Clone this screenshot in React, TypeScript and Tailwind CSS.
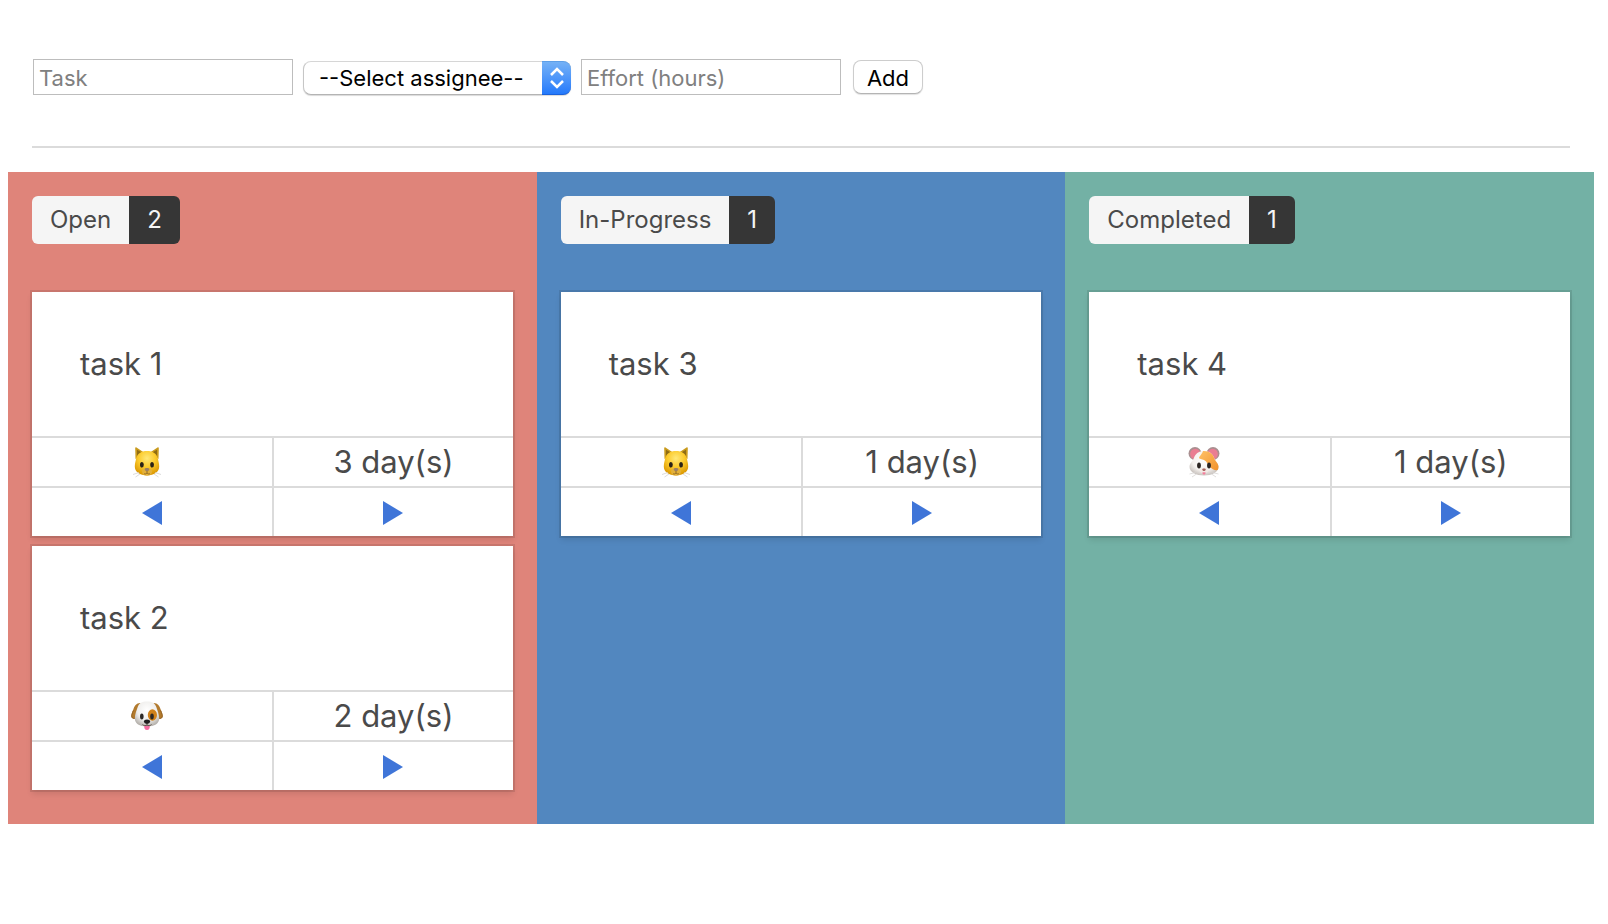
import { useState } from "react";
import type { FormEvent } from "react";

type Animal = "cat" | "dog" | "hamster";
type Task = { id: number; name: string; assignee: Animal; days: number; stage: number };

const stages = [
  { title: "Open", color: "bg-[#df847a]" },
  { title: "In-Progress", color: "bg-[#5287bf]" },
  { title: "Completed", color: "bg-[#73b1a5]" },
];

const initialTasks: Task[] = [
  { id: 1, name: "task 1", assignee: "cat", days: 3, stage: 0 },
  { id: 2, name: "task 2", assignee: "dog", days: 2, stage: 0 },
  { id: 3, name: "task 3", assignee: "cat", days: 1, stage: 1 },
  { id: 4, name: "task 4", assignee: "hamster", days: 1, stage: 2 },
];

function Cat() {
  return (
    <svg viewBox="0 0 32 32" className="size-8" role="img" aria-label="cat">
      <defs>
        <radialGradient id="cat-face" cx="50%" cy="30%" r="70%">
          <stop offset="0" stopColor="#ffe878" />
          <stop offset="0.5" stopColor="#fccb2c" />
          <stop offset="1" stopColor="#d99500" />
        </radialGradient>
      </defs>
      <path d="M4.500 13 4.200 2.200c0-.9.6-1.200 1.300-.7L13 6.500zM27.500 13l.3-10.800c0-.9-.6-1.200-1.300-.7L19 6.500z" fill="#c99a1c" />
      <path d="M6 10.500V3.700L11.500 7zM26 10.500V3.700L20.500 7z" fill="#8f6c14" />
      <path d="M16 5c5.500 0 10 2.500 11 8 .4 2.500 1.200 4.500 1.200 7.500 0 5.500-5.200 9-12.200 9S3.800 26 3.800 20.500c0-3 .8-5 1.200-7.500 1-5.500 5.500-8 11-8z" fill="url(#cat-face)" />
      <path d="M11 25.500c0-2.500 2.300-3.500 5-3.500s5 1 5 3.500-2 4-5 4-5-1.500-5-4z" fill="#e3b03a" />
      <ellipse cx="10.900" cy="18.800" rx="1.900" ry="2.800" fill="#2b2318" />
      <ellipse cx="21.100" cy="18.800" rx="1.900" ry="2.800" fill="#2b2318" />
      <path d="M13.700 23.300c0-1 1-1.300 2.300-1.300s2.300.3 2.300 1.300-1.300 2-2.300 2-2.300-1-2.300-2z" fill="#9b8065" />
      <path d="M16 25v2m0 0c-.8 1-2 1.200-3 .7m3-.7c.8 1 2 1.200 3 .7" stroke="#8a6420" strokeWidth=".9" fill="none" />
      <path d="m8 26.500-6 2M9 28l-4.500 3M24 26.500l6 2M23 28l4.500 3" stroke="#d2d2d2" strokeWidth=".8" />
    </svg>
  );
}

function Dog() {
  return (
    <svg viewBox="0 0 32 32" className="size-8" role="img" aria-label="dog">
      <defs>
        <radialGradient id="dog-face" cx="50%" cy="35%" r="65%">
          <stop offset="0" stopColor="#ffffff" />
          <stop offset="0.6" stopColor="#f0efed" />
          <stop offset="1" stopColor="#b5b1ac" />
        </radialGradient>
      </defs>
      <path d="M9.500 3C5 3 3.500 6 2.300 9.500 1.300 12.500-.2 15.500.8 17.500c1 1.800 4 1.500 5.700-.5C8 13 9 8 9.500 3zM22.500 3c4.500 0 6 3 7.200 6.500 1 3 2.500 6 1.500 8-1 1.800-4 1.500-5.700-.5C24 13 23 8 22.500 3z" fill="#b27a2d" />
      <path d="M2.300 10.500C1.300 13 0 15.500.9 17.300c.8 1.500 3 1.500 4.500.2M29.700 10.500c1 2.500 2.300 5 1.400 6.800-.8 1.500-3 1.500-4.500.2" stroke="#8c5a1c" strokeWidth=".9" fill="none" />
      <path d="M16 1.500c5 0 8 1.800 9.300 5.500 1.200 3.500 2.900 7.500 2.900 11.500 0 5-4.700 8-12.200 8s-12.200-3-12.200-8c0-4 1.700-8 2.900-11.500C8 3.300 11 1.500 16 1.500z" fill="url(#dog-face)" />
      <ellipse cx="21.400" cy="15" rx="4.600" ry="5.800" fill="#cf811b" />
      <ellipse cx="10.800" cy="16.500" rx="1.800" ry="2.900" fill="#2d2825" />
      <ellipse cx="21" cy="16.500" rx="1.800" ry="2.900" fill="#2d2825" />
      <path d="M12.900 21.500c0-1.300 1.200-2 3.100-2s3.100.7 3.100 2-2 2.600-3.100 2.600-3.100-1.300-3.100-2.600z" fill="#1f1d1d" />
      <path d="M13.300 25.500c1.700.7 3.700.7 5.400 0 .4 2.600-.5 4.500-2.700 4.500s-3.100-1.900-2.700-4.500z" fill="#f46ca0" />
      <path d="M16 23.500v1.800m-4.500-.8c1 1.300 3.500 1.400 4.500.6 1 .8 3.500.7 4.500-.6" stroke="#53463e" strokeWidth=".9" fill="none" />
    </svg>
  );
}

function Hamster() {
  return (
    <svg viewBox="0 0 32 32" className="size-8" role="img" aria-label="hamster">
      <defs>
        <radialGradient id="hamster-face" cx="50%" cy="40%" r="65%">
          <stop offset="0" stopColor="#ffffff" />
          <stop offset="0.6" stopColor="#f6f2ef" />
          <stop offset="1" stopColor="#bfb8b3" />
        </radialGradient>
        <linearGradient id="hamster-patch" x1="0" y1="0" x2="1" y2="1">
          <stop offset="0" stopColor="#ffc167" />
          <stop offset="1" stopColor="#f1922c" />
        </linearGradient>
      </defs>
      <circle cx="7" cy="7.500" r="6.500" fill="#a98f90" />
      <circle cx="25" cy="7.500" r="6.500" fill="#a98f90" />
      <circle cx="7.300" cy="8" r="5.200" fill="#ea7d92" />
      <circle cx="24.700" cy="8" r="5.200" fill="#ea7d92" />
      <path d="M16 5c5.500 0 9 3 10.300 7.500.7 2.500 4.200 4.500 4.200 8.300 0 5.700-7 8.700-14.500 8.700s-14.500-3-14.500-8.700c0-3.800 3.500-5.800 4.200-8.300C7 8 10.500 5 16 5z" fill="url(#hamster-face)" />
      <path d="M15 5c6.500-.3 10 3 11.300 7.500.7 2.500 4.200 4.500 4.200 8.300 0 1.200-.3 2.300-.8 3.200-2.700.5-5.700-.5-7.700-3-2.500-3-3-5.500-6-7-2-1-5-1-5-2 0-1.500 3-3.500 4-7z" fill="url(#hamster-patch)" />
      <ellipse cx="11" cy="19.500" rx="1.900" ry="2.900" fill="#2b2522" />
      <ellipse cx="21" cy="19.500" rx="1.900" ry="2.900" fill="#2b2522" />
      <ellipse cx="16" cy="24.300" rx="4.200" ry="2.600" fill="#f4eae6" />
      <path d="M14.200 23.500c0-.8.800-1 1.800-1s1.800.2 1.800 1-1 1.500-1.800 1.500-1.800-.7-1.800-1.500z" fill="#a5645e" />
      <path d="M14.500 26.300h3c.2 1.600-.4 2.300-1.500 2.300s-1.700-.7-1.500-2.300z" fill="#f47f9d" />
      <path d="m7.500 26.500-6 1.500M8.500 28l-4.500 3M24.500 26.500l6 1.500M23.500 28l4.500 3" stroke="#d8d6d4" strokeWidth=".8" />
    </svg>
  );
}

const avatars = { cat: Cat, dog: Dog, hamster: Hamster };

function TaskCard({ task, onMove }: { task: Task; onMove: (step: number) => void }) {
  const Avatar = avatars[task.assignee];
  return (
    <article className="mb-2.5 bg-white text-[31px] leading-12 shadow-[0_4px_6px_rgba(10,10,10,0.1),0_0_0_2px_rgba(10,10,10,0.1)]">
      <h2 className="p-12">{task.name}</h2>
      <div className="grid h-[50px] grid-cols-2 border-t-2 border-[#dbdbdb]">
        <div className="flex items-center justify-center pr-2.5">
          <Avatar />
        </div>
        <p className="border-l-2 border-[#dbdbdb] text-center">{task.days} day(s)</p>
      </div>
      <div className="grid h-[50px] grid-cols-2 border-t-2 border-[#dbdbdb]">
        <button
          type="button"
          aria-label={`Move ${task.name} back`}
          onClick={() => onMove(-1)}
          className="flex cursor-pointer items-center justify-center pt-0.5"
        >
          <svg viewBox="0 0 20 24" className="h-6 w-5 fill-[#3f75d8]">
            <path d="M20 0v24L0 12z" />
          </svg>
        </button>
        <button
          type="button"
          aria-label={`Move ${task.name} forward`}
          onClick={() => onMove(1)}
          className="flex cursor-pointer items-center justify-center border-l-2 border-[#dbdbdb] pt-0.5"
        >
          <svg viewBox="0 0 20 24" className="h-6 w-5 fill-[#3f75d8]">
            <path d="M0 0v24l20-12z" />
          </svg>
        </button>
      </div>
    </article>
  );
}

export default function App() {
  const [tasks, setTasks] = useState(initialTasks);
  const [name, setName] = useState("");
  const [assignee, setAssignee] = useState("");
  const [effort, setEffort] = useState("");

  const addTask = (event: FormEvent) => {
    event.preventDefault();
    if (!name || !assignee || !effort) return;
    const days = Math.ceil(Number(effort) / 8) || 1;
    setTasks([...tasks, { id: Date.now(), name, assignee: assignee as Animal, days, stage: 0 }]);
    setName("");
    setAssignee("");
    setEffort("");
  };

  const move = (id: number, step: number) =>
    setTasks(
      tasks.map((task) =>
        task.id === id ? { ...task, stage: Math.min(2, Math.max(0, task.stage + step)) } : task,
      ),
    );

  return (
    <main className="min-h-screen bg-white pr-3.5 pl-2 font-['Inter','Liberation_Sans',sans-serif] text-[#4a4a4a]">
      <form
        onSubmit={addTask}
        className="mx-6 flex flex-wrap items-center gap-2.5 border-b-2 border-[#dbdbdb] pt-[59px] pb-[51px] pl-px text-[22px] leading-8"
      >
        <input
          aria-label="Task"
          placeholder="Task"
          value={name}
          onChange={(event) => setName(event.target.value)}
          className="h-9 w-65 border border-[#bdbdbd] px-[5px] pt-0.5 placeholder:text-[#808080]"
        />
        <div className="relative mt-0.5 flex h-[34px] w-67">
          <select
            aria-label="Assignee"
            value={assignee}
            onChange={(event) => setAssignee(event.target.value)}
            className="w-full appearance-none rounded-lg border border-[#c6c6c6] border-t-[#d6d6d6] border-b-[#b4b4b4] bg-white pr-8 pl-[15px] text-black shadow-[0_1px_1px_rgba(0,0,0,0.15)]"
          >
            <option value="">--Select assignee--</option>
            <option value="cat">cat</option>
            <option value="dog">dog</option>
            <option value="hamster">hamster</option>
          </select>
          <span className="pointer-events-none absolute inset-y-0 right-0 flex w-[29px] items-center justify-center rounded-r-lg border-t border-b border-t-[#5d9fe8] border-b-[#1a62dc] bg-linear-to-b from-[#74b1f6] to-[#2379fb]">
            <svg viewBox="0 0 14 22" className="h-[22px] w-3.5 fill-none stroke-white stroke-[2.5]">
              <path d="m1 8 6-6 6 6M1 14l6 6 6-6" />
            </svg>
          </span>
        </div>
        <input
          aria-label="Effort (hours)"
          placeholder="Effort (hours)"
          value={effort}
          onChange={(event) => setEffort(event.target.value)}
          className="h-9 w-65 border border-[#bdbdbd] px-[5px] pt-0.5 placeholder:text-[#808080]"
        />
        <button
          type="submit"
          className="ml-0.5 flex h-[34px] w-[70px] cursor-pointer items-center justify-center rounded-lg border border-[#cdcdcd] border-b-[#b4b4b4] bg-white pt-0.5 text-black shadow-[0_1px_1px_rgba(0,0,0,0.12)]"
        >
          Add
        </button>
      </form>
      <div className="mt-6 grid grid-cols-3">
        {stages.map((stage, index) => {
          const items = tasks.filter((task) => task.stage === index);
          return (
            <section key={stage.title} className={`${stage.color} p-6`}>
              <header className="mb-12 flex text-2xl/12">
                <h1 className="rounded-l-md bg-[#f5f5f5] px-[18px]">{stage.title}</h1>
                <span className="rounded-r-md bg-[#363636] px-[18px] text-[#f5f5f5]">{items.length}</span>
              </header>
              {items.map((task) => (
                <TaskCard key={task.id} task={task} onMove={(step) => move(task.id, step)} />
              ))}
            </section>
          );
        })}
      </div>
    </main>
  );
}
